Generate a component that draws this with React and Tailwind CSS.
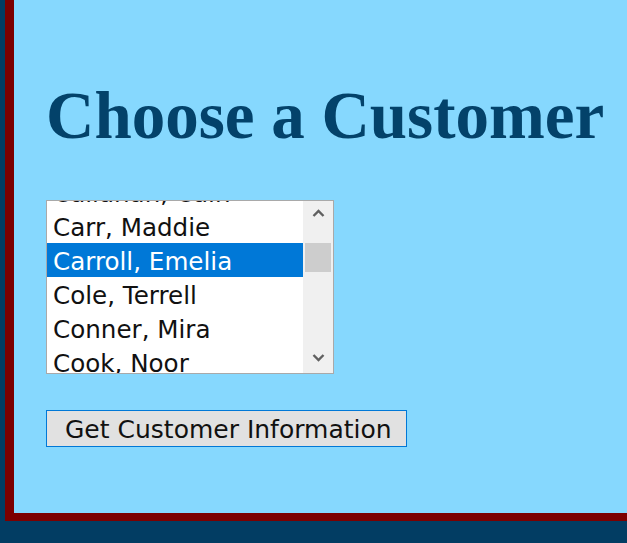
import React from "react";

const names = [
  "Callahan, Cain",
  "Carr, Maddie",
  "Carroll, Emelia",
  "Cole, Terrell",
  "Conner, Mira",
  "Cook, Noor",
  "Cooper, Aiden",
];

export default function App() {
  return (
    <div className="w-[627px] h-[543px] bg-[#023d63] pl-[5px] pb-[22px] overflow-hidden">
      <div className="h-full bg-[#86d8fe] border-l-[9px] border-b-[8px] border-[#7c0000] pl-[32px] pt-[82px] flex flex-col items-start">
        <h1
          className="text-[67px] leading-none font-bold text-[#03426a] whitespace-nowrap"
          style={{ fontFamily: '"Liberation Serif", "Times New Roman", serif' }}
        >
          Choose a Customer
        </h1>
        <div className="mt-[51px] w-[288px] h-[174px] border border-[#a9a9a9] bg-white flex overflow-hidden">
          <div className="flex-1 overflow-hidden">
            <div className="-mt-[26px] flex flex-col">
              {names.map((n, i) => (
                <div
                  key={n}
                  className={
                    "h-[34px] pt-[1px] leading-[35px] pl-[6px] text-[24.6px] whitespace-nowrap " +
                    (i === 2 ? "bg-[#0078d7] text-white" : "text-[#111]")
                  }
                  style={{ fontFamily: '"DejaVu Sans", Verdana, sans-serif' }}
                >
                  {n}
                </div>
              ))}
            </div>
          </div>
          <div className="w-[30px] bg-[#f0f0f0] flex flex-col items-center">
            <div className="h-[26px] flex items-center justify-center pb-[2px]">
              <svg width="13" height="9" viewBox="0 0 13 9">
                <path d="M1.5 7 L6.5 2 L11.5 7" fill="none" stroke="#606060" strokeWidth="2.4" />
              </svg>
            </div>
            <div className="mt-[16px] w-[26px] h-[29px] bg-[#cdcdcd]" />
            <div className="flex-1" />
            <div className="h-[30px] flex items-center justify-center pb-[2px]">
              <svg width="13" height="9" viewBox="0 0 13 9">
                <path d="M1.5 2 L6.5 7 L11.5 2" fill="none" stroke="#606060" strokeWidth="2.4" />
              </svg>
            </div>
          </div>
        </div>
        <button
          className="mt-[36px] h-[37px] w-[361px] bg-[#e1e1e1] border border-[#0078d7] text-[25px] text-[#111] leading-none pl-[18px] pt-[2px] flex items-center whitespace-nowrap"
          style={{ fontFamily: '"DejaVu Sans", Verdana, sans-serif' }}
        >
          Get Customer Information
        </button>
      </div>
    </div>
  );
}
